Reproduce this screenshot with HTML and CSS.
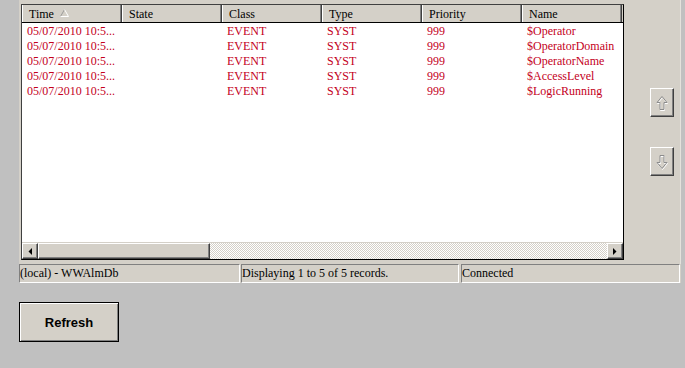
FILE: index.html
```html
<!DOCTYPE html>
<html lang="en">
<head>
  <meta charset="UTF-8">
  <title>Alarm DB View</title>
  <link rel="stylesheet" href="styles.css">
</head>
<body>
  <div class="window">
    <div class="control">
      <div class="grid">
        <div class="grid-head">
          <div class="col">Time
            <svg class="sort" width="9" height="8" viewBox="0 0 9 8">
              <path d="M4.5 0.5 L0.5 7.5" stroke="#9a9a9a" fill="none"/>
              <path d="M4.5 0.5 L8.5 7.5 H0.5" stroke="#ffffff" fill="none"/>
            </svg>
          </div>
          <div class="col">State</div>
          <div class="col">Class</div>
          <div class="col">Type</div>
          <div class="col">Priority</div>
          <div class="col">Name</div>
        </div>
        <div class="grid-body">
          <div class="row"><span>05/07/2010 10:5...</span><span></span><span>EVENT</span><span>SYST</span><span>999</span><span>$Operator</span></div>
          <div class="row"><span>05/07/2010 10:5...</span><span></span><span>EVENT</span><span>SYST</span><span>999</span><span>$OperatorDomain</span></div>
          <div class="row"><span>05/07/2010 10:5...</span><span></span><span>EVENT</span><span>SYST</span><span>999</span><span>$OperatorName</span></div>
          <div class="row"><span>05/07/2010 10:5...</span><span></span><span>EVENT</span><span>SYST</span><span>999</span><span>$AccessLevel</span></div>
          <div class="row"><span>05/07/2010 10:5...</span><span></span><span>EVENT</span><span>SYST</span><span>999</span><span>$LogicRunning</span></div>
        </div>
        <div class="hscroll">
          <div class="sb-btn">
            <svg width="4" height="7" viewBox="0 0 4 7"><path d="M4 0 V7 L0.5 3.5 Z" fill="#000"/></svg>
          </div>
          <div class="sb-thumb"></div>
          <div class="sb-track"></div>
          <div class="sb-btn">
            <svg width="4" height="7" viewBox="0 0 4 7"><path d="M0 0 V7 L3.5 3.5 Z" fill="#000"/></svg>
          </div>
        </div>
      </div>
      <div class="side">
        <button class="nav">
          <svg width="12" height="16" viewBox="0 0 12 16">
            <path d="M6.5 2.5 L11.5 8.5 H8.5 V15.5 H4.5 V8.5 H1.5 Z" stroke="#ffffff" fill="none"/>
            <path d="M6 1.5 L11 7.5 H8 V14.5 H4 V7.5 H1 Z" stroke="#8c8c8c" fill="none"/>
          </svg>
        </button>
        <button class="nav down">
          <svg width="12" height="16" viewBox="0 0 12 16">
            <path d="M6.5 15.5 L11.5 9.5 H8.5 V2.5 H4.5 V9.5 H1.5 Z" stroke="#ffffff" fill="none"/>
            <path d="M6 14.5 L11 8.5 H8 V1.5 H4 V8.5 H1 Z" stroke="#8c8c8c" fill="none"/>
          </svg>
        </button>
      </div>
    </div>
    <div class="status">
      <div class="panel p1">(local) - WWAlmDb</div>
      <div class="panel p2">Displaying 1 to 5 of 5 records.</div>
      <div class="panel p3">Connected</div>
    </div>
    <button class="refresh">Refresh</button>
  </div>
</body>
</html>
```

FILE: styles.css
```css
body {
  margin: 0;
  background: #c0c0c0;
  font-family: "Liberation Serif", "Times New Roman", serif;
  font-size: 12px;
}

.window {
  padding-left: 19px;
  width: 662px;
}

.control {
  display: flex;
  height: 264px;
  box-sizing: border-box;
  padding: 4px 0 0 2px;
  background: #d4d0c8;
  border-right: 1px solid #e4e2dc;
}

.grid {
  width: 603px;
  height: 256px;
  box-sizing: border-box;
  border: 1px solid #000;
  border-top-color: #404040;
  border-left-color: #404040;
  background: #fff;
  display: flex;
  flex-direction: column;
}

.grid-head {
  display: flex;
  height: 17px;
  border-bottom: 1px solid #000;
  background: #d4d0c8;
}

.grid-head .col {
  width: 100px;
  box-sizing: border-box;
  padding-left: 6px;
  line-height: 16px;
  border-left: 1px solid #fff;
  border-right: 1px solid #404040;
  box-shadow: inset -1px 0 #808080;
  color: #000;
  display: flex;
  align-items: center;
  gap: 6px;
}

.sort {
  margin-top: -2px;
}

.grid-body {
  flex: 1;
  padding-top: 1px;
}

.row {
  display: flex;
  height: 15px;
  line-height: 15px;
  color: #c4001c;
}

.row span {
  width: 100px;
  padding-left: 5px;
  box-sizing: border-box;
  white-space: nowrap;
}

.hscroll {
  display: flex;
  height: 16px;
  border-top: 1px solid #d4d0c8;
}

.sb-btn {
  width: 16px;
  box-sizing: border-box;
  background: #d4d0c8;
  border: 1px solid;
  border-color: #fff #404040 #404040 #fff;
  box-shadow: inset -1px -1px #808080;
  display: flex;
  align-items: center;
  justify-content: center;
}

.sb-thumb {
  width: 172px;
  box-sizing: border-box;
  background: #d4d0c8;
  border: 1px solid;
  border-color: #fff #404040 #404040 #fff;
  box-shadow: inset -1px -1px #808080;
}

.sb-track {
  flex: 1;
  background: repeating-conic-gradient(#d4d0c8 0 25%, #fff 0 50%) 0 0 / 2px 2px;
}

.side {
  flex: 1;
  display: flex;
  flex-direction: column;
  padding: 84px 0 0 26px;
}

.nav {
  width: 24px;
  height: 29px;
  padding: 0;
  background: #d4d0c8;
  border: 1px solid;
  border-color: #fff #404040 #404040 #fff;
  box-shadow: inset -1px -1px #808080;
  display: flex;
  align-items: center;
  justify-content: center;
}

.nav.down {
  margin-top: 30px;
}

.status {
  display: flex;
  height: 19px;
  width: 662px;
  background: #d4d0c8;
}

.panel {
  box-sizing: border-box;
  border: 1px solid;
  border-color: #808080 #fff #fff #808080;
  line-height: 17px;
  white-space: nowrap;
  color: #000;
}

.p1 {
  width: 221px;
}

.p2 {
  width: 218px;
  margin-left: 1px;
}

.p3 {
  width: 219px;
  margin-left: 2px;
}

.refresh {
  display: block;
  margin-top: 19px;
  width: 100px;
  height: 40px;
  padding: 0;
  background: #d4d0c8;
  border: 1px solid #000;
  box-shadow: inset 1px 1px #fff, inset -1px -1px #808080;
  font-family: "Liberation Sans", Arial, sans-serif;
  font-weight: bold;
  font-size: 13px;
  color: #000;
}
```
